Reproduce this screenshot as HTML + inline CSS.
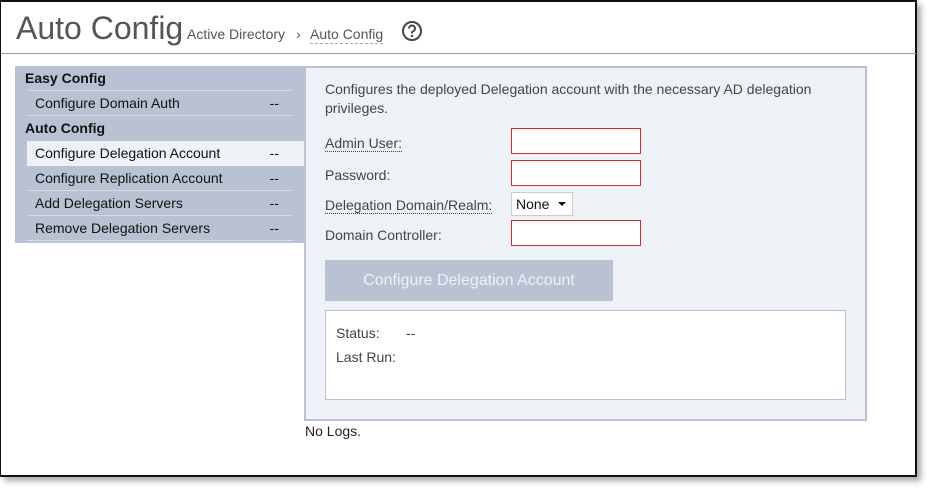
<!DOCTYPE html>
<html><head><style>
*{margin:0;padding:0;box-sizing:border-box}
body{width:932px;height:493px;background:#fff;font-family:"Liberation Sans",sans-serif;position:relative;overflow:hidden;color:#333}
.frame{position:absolute;left:0;top:0;width:917px;height:477px;border:2px solid #111;border-left:1px solid #111;box-shadow:4px 4px 6px #aaa;background:#fff}
.abs{position:absolute;white-space:nowrap}
.hdr{left:16px;top:10px;font-size:32px;color:#555}
.bc{top:26px;font-size:14px;color:#555}
.hline{left:1px;top:53px;width:915px;height:1px;background:#999}
.menu{left:15px;top:66px;width:290px;height:177px;background:#b8c2d2}
.row{position:absolute;left:12px;width:266px;height:25px;border-bottom:1px solid #d4dae4;font-size:14px;color:#111}
.row span{position:absolute;left:8px;top:4px}
.row i{position:absolute;right:14px;top:4px;font-style:normal}
.h{position:absolute;left:10px;font-size:14px;font-weight:bold;color:#111}
.panel{left:304px;top:66px;width:563px;height:355px;background:#eef2f7;border:2px solid #b8c2d2}
.lbl{font-size:14px;color:#444}
.dot{border-bottom:1px dotted #444}
.inp{width:130px;height:26px;border:1px solid #c8302c;background:#fff}
</style></head><body>
<div class="frame"></div>
<div class="abs hdr">Auto Config</div>
<div class="abs bc" style="left:187px">Active Directory</div>
<div class="abs bc" style="left:296px">›</div>
<div class="abs bc" style="left:310px;border-bottom:1px dashed #aaa;padding-bottom:1px">Auto Config</div>
<svg class="abs" style="left:401px;top:20px" width="22" height="22" viewBox="0 0 22 22"><circle cx="11" cy="11" r="9" fill="none" stroke="#444" stroke-width="2"/><path d="M8 8.5a3 3 0 1 1 4 2.8c-.8.4-1 .9-1 1.7v.5" fill="none" stroke="#444" stroke-width="2"/><circle cx="11" cy="16" r="1.2" fill="#444"/></svg>
<div class="abs hline"></div>
<div class="abs menu">
 <div class="h" style="top:4px">Easy Config</div>
 <div class="row" style="top:0;height:25px;border-bottom:1px solid #d4dae4"></div>
 <div class="row" style="top:25px"><span>Configure Domain Auth</span><i>--</i></div>
 <div class="h" style="top:54px">Auto Config</div>
 <div class="row" style="top:75px;width:278px;background:#eef2f7;border-bottom:none"><span>Configure Delegation Account</span><i style="right:26px">--</i></div>
 <div class="row" style="top:100px"><span>Configure Replication Account</span><i>--</i></div>
 <div class="row" style="top:125px"><span>Add Delegation Servers</span><i>--</i></div>
 <div class="row" style="top:150px"><span>Remove Delegation Servers</span><i>--</i></div>
</div>
<div class="abs panel">
 <div class="abs lbl" style="left:19px;top:12px;line-height:19px">Configures the deployed Delegation account with the necessary AD delegation<br>privileges.</div>
 <div class="abs lbl dot" style="left:19px;top:67px">Admin User:</div>
 <div class="abs inp" style="left:205px;top:60px"></div>
 <div class="abs lbl" style="left:19px;top:99px">Password:</div>
 <div class="abs inp" style="left:205px;top:92px"></div>
 <div class="abs lbl dot" style="left:19px;top:129px">Delegation Domain/Realm:</div>
 <div class="abs" style="left:205px;top:124px;width:62px;height:24px;background:#fff;border:1px solid #ccc;font-size:14px;color:#111;padding:3px 0 0 4px">None <span style="position:absolute;right:6px;top:9px;border-left:4px solid transparent;border-right:4px solid transparent;border-top:4px solid #111"></span></div>
 <div class="abs lbl" style="left:19px;top:159px">Domain Controller:</div>
 <div class="abs inp" style="left:205px;top:152px"></div>
 <div class="abs" style="left:19px;top:192px;width:288px;height:41px;background:#b8c2d2;color:#eef2f7;font-size:16px;text-align:center;line-height:41px">Configure Delegation Account</div>
 <div class="abs" style="left:19px;top:242px;width:521px;height:90px;background:#fff;border:1px solid #b8c2d2">
  <div class="abs lbl" style="left:10px;top:14px">Status:</div>
  <div class="abs lbl" style="left:80px;top:14px">--</div>
  <div class="abs lbl" style="left:10px;top:38px">Last Run:</div>
 </div>
</div>
<div class="abs lbl" style="left:305px;top:423px;color:#222">No Logs.</div>
</body></html>
